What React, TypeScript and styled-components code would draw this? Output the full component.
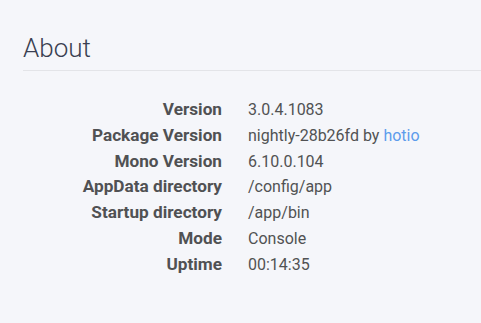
import { createGlobalStyle, styled } from "styled-components";

const GlobalStyle = createGlobalStyle`
  html, body {
    margin: 0;
    padding: 0;
    background: #f5f6fa;
  }
  body {
    font-family: Roboto, "Open Sans", "Liberation Sans", sans-serif;
    color: #515253;
  }
`;

const aboutInfo = [
  { title: "Version", value: "3.0.4.1083" },
  { title: "Package Version", value: "nightly-28b26fd by ", author: "hotio" },
  { title: "Mono Version", value: "6.10.0.104" },
  { title: "AppData directory", value: "/config/app" },
  { title: "Startup directory", value: "/app/bin" },
  { title: "Mode", value: "Console" },
  { title: "Uptime", value: "00:14:35" },
];

const App = () => {
  return (
    <SPage>
      <GlobalStyle />
      <SSection>
        <SLegend>About</SLegend>
        <SList>
          {aboutInfo.map((item) => (
            <SItem key={item.title}>
              <dt>{item.title}</dt>
              <dd>
                {item.value}
                {item.author && <SLink href="#">{item.author}</SLink>}
              </dd>
            </SItem>
          ))}
        </SList>
      </SSection>
    </SPage>
  );
};

export default App;

const SPage = styled.div`
  width: 100%;
  height: 323px;
  overflow: hidden;
  padding: 33px 0 0 23px;
  box-sizing: border-box;
`;

const SSection = styled.div`
  display: flex;
  flex-direction: column;
`;

const SLegend = styled.div`
  font-size: 26px;
  font-weight: 300;
  line-height: 31px;
  color: #3a3f51;
  padding-bottom: 6px;
  border-bottom: 1px solid #e3e4e8;
`;

const SList = styled.dl`
  margin: 26px 0 0 0;
  display: flex;
  flex-direction: column;
`;

const SItem = styled.div`
  display: flex;
  align-items: baseline;
  line-height: 25.8px;
  & > dt {
    width: 199px;
    text-align: right;
    font-size: 17.2px;
    font-weight: 700;
    color: #505153;
  }
  & > dd {
    margin: 0 0 0 26px;
    font-size: 16px;
    font-weight: 400;
    color: #515253;
  }
`;

const SLink = styled.a`
  color: #5d9cec;
  text-decoration: none;
`;
